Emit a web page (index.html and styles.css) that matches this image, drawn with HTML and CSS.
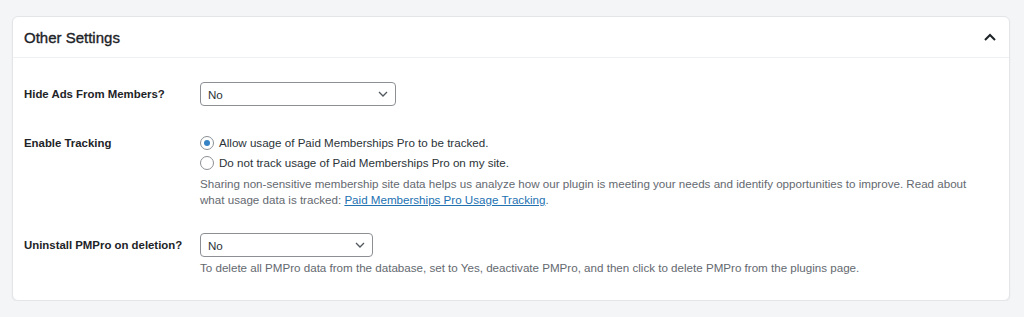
FILE: index.html
```html
<!DOCTYPE html>
<html lang="en">
<head>
<meta charset="utf-8">
<title>Other Settings</title>
<link rel="stylesheet" href="styles.css">
</head>
<body>
<div class="card">
  <div class="card-header">
    <h2 class="card-title">Other Settings</h2>
    <button class="toggle" aria-label="Collapse">
      <svg width="12" height="8" viewBox="0 0 12 8"><path d="M1 7 L6 2 L11 7" fill="none" stroke="#1d2327" stroke-width="2"/></svg>
    </button>
  </div>
  <div class="card-body">
    <div class="row row-first">
      <div class="label">Hide Ads From Members?</div>
      <div class="field">
        <div class="select select-wide"><span>No</span>
          <svg width="10" height="6" viewBox="0 0 10 6"><path d="M1 1 L5 5 L9 1" fill="none" stroke="#50575e" stroke-width="1.3"/></svg>
        </div>
      </div>
    </div>
    <div class="row row-tracking">
      <div class="label label-radio">Enable Tracking</div>
      <div class="field">
        <label class="radio-line"><span class="radio checked"></span>Allow usage of Paid Memberships Pro to be tracked.</label>
        <label class="radio-line"><span class="radio"></span>Do not track usage of Paid Memberships Pro on my site.</label>
        <p class="desc">Sharing non-sensitive membership site data helps us analyze how our plugin is meeting your needs and identify opportunities to improve. Read about what usage data is tracked: <a href="#">Paid Memberships Pro Usage Tracking</a>.</p>
      </div>
    </div>
    <div class="row row-uninstall">
      <div class="label">Uninstall PMPro on deletion?</div>
      <div class="field">
        <div class="select select-narrow"><span>No</span>
          <svg width="10" height="6" viewBox="0 0 10 6"><path d="M1 1 L5 5 L9 1" fill="none" stroke="#50575e" stroke-width="1.3"/></svg>
        </div>
        <p class="desc desc-uninstall">To delete all PMPro data from the database, set to Yes, deactivate PMPro, and then click to delete PMPro from the plugins page.</p>
      </div>
    </div>
  </div>
</div>
</body>
</html>
```
FILE: styles.css
```css
* { box-sizing: border-box; }
body {
  margin: 0;
  background: #f4f5f7;
  font-family: "Liberation Sans", Arial, sans-serif;
  font-size: 11.6px;
  color: #1d2327;
}
.card {
  margin: 16px 14px 0 12px;
  background: #fff;
  border: 1px solid #e3e5e8;
  border-radius: 6px;
  box-shadow: 0 1px 2px rgba(0,0,0,0.06);
}
.card-header {
  height: 41px;
  border-bottom: 1px solid #eef0f2;
  display: flex;
  align-items: center;
  justify-content: space-between;
  padding: 0 12px 0 11px;
}
.card-title {
  margin: 0;
  font-size: 15px;
  font-weight: 400;
  color: #1d2327;
  -webkit-text-stroke: 0.35px #1d2327;
}
.toggle {
  border: 0;
  background: none;
  padding: 0;
  width: 14px;
  height: 12px;
  display: flex;
  align-items: center;
  justify-content: center;
}
.card-body {
  padding: 24px 11px 24px;
}
.row {
  display: flex;
  align-items: flex-start;
}
.row-tracking { margin-top: 27px; }
.row-uninstall { margin-top: 25px; }
.label {
  width: 176px;
  flex: none;
  font-weight: 700;
  font-size: 11.4px;
  line-height: 24px;
  color: #1d2327;
}
.label-radio { line-height: 20px; }
.field { flex: 1; }
.select {
  height: 24px;
  border: 1px solid #8c8f94;
  border-radius: 4px;
  display: flex;
  align-items: center;
  justify-content: space-between;
  padding: 0 7px 0 7px;
  font-size: 11.6px;
  color: #2c3338;
}
.select-wide { width: 196px; }
.select-narrow { width: 173px; }
.radio-line {
  display: flex;
  align-items: center;
  height: 20px;
  line-height: 20px;
  color: #2c3338;
}
.radio {
  width: 14px;
  height: 14px;
  border: 1px solid #8c8f94;
  border-radius: 50%;
  margin-right: 5px;
  display: flex;
  align-items: center;
  justify-content: center;
}
.radio.checked::after {
  content: "";
  width: 6px;
  height: 6px;
  border-radius: 50%;
  background: #3582c4;
}
.desc {
  margin: 3px 0 0;
  line-height: 16px;
  color: #646970;
  max-width: 785px;
}
.desc a { color: #2271b1; }
.desc-uninstall { margin-top: 3px; }
```
